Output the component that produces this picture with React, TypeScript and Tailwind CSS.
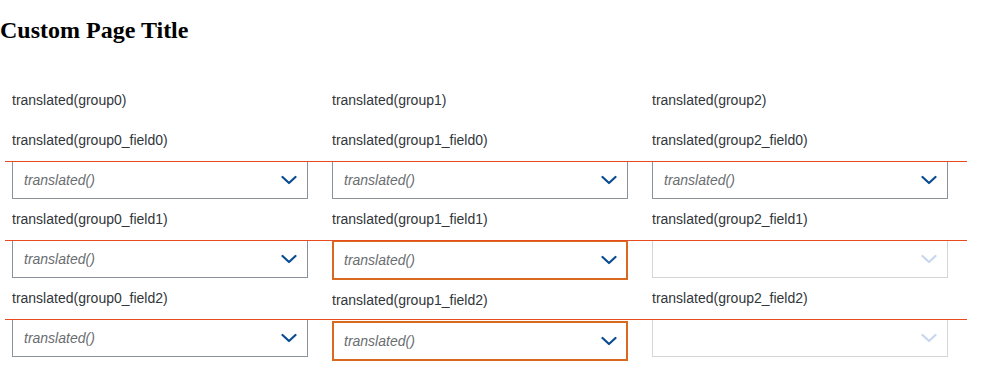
type FieldState = 'normal' | 'warning' | 'disabled'

const groups = [0, 1, 2]
const fields = [0, 1, 2]

// state per [group][field]
const states: FieldState[][] = [
  ['normal', 'normal', 'normal'],
  ['normal', 'warning', 'warning'],
  ['normal', 'disabled', 'disabled'],
]

function Chevron({ disabled }: { disabled?: boolean }) {
  return (
    <svg width="16" height="16" viewBox="0 0 16 16" fill="none" className="shrink-0">
      <path
        d="M1.5 5 L8 11 L14.5 5"
        stroke={disabled ? '#c7d7ec' : '#0a4c92'}
        strokeWidth="2.2"
        strokeLinecap="round"
        strokeLinejoin="round"
      />
    </svg>
  )
}

function Select({ state }: { state: FieldState }) {
  if (state === 'disabled') {
    return (
      <div className="flex h-[38px] w-[296px] items-center justify-end border border-[#d3d5d8] bg-white pr-[10px]">
        <Chevron disabled />
      </div>
    )
  }
  if (state === 'warning') {
    return (
      <div className="flex h-[40px] w-[296px] items-center justify-between border-2 border-[#d8691f] bg-white pl-[10px] pr-[9px]">
        <span className="italic text-[#6a6d70]">translated()</span>
        <Chevron />
      </div>
    )
  }
  return (
    <div className="flex h-[38px] w-[296px] items-center justify-between border border-[#89919a] bg-white pl-[11px] pr-[10px]">
      <span className="italic text-[#6a6d70]">translated()</span>
      <Chevron />
    </div>
  )
}

export default function App() {
  return (
    <div className="min-h-screen bg-white text-[14px] text-[#32363a] font-['Liberation_Sans',Arial,sans-serif]">
      <h2 className="mt-4 mb-9 text-[24px] leading-[28px] font-bold text-black font-['Liberation_Serif','Times_New_Roman',serif]">
        Custom Page Title
      </h2>
      <div className="relative ml-[5px] flex w-[962px] pl-[7px]">
        {groups.map((g) => (
          <div key={g} className="flex w-[320px] shrink-0 flex-col">
            <div className="pt-[10px] pb-[10px] leading-5">translated(group{g})</div>
            {fields.map((f) => (
              <div key={f}>
                <div className="pt-[10px] pb-[11px] leading-5">
                  translated(group{g}_field{f})
                </div>
                <Select state={states[g][f]} />
              </div>
            ))}
          </div>
        ))}
        {/* row guide lines drawn over the fields */}
        <div className="pointer-events-none absolute left-0 top-[81px] h-px w-full bg-[#e84c1e]" />
        <div className="pointer-events-none absolute left-0 top-[160px] h-px w-full bg-[#e84c1e]" />
        <div className="pointer-events-none absolute left-0 top-[239px] h-px w-full bg-[#e84c1e]" />
      </div>
    </div>
  )
}
